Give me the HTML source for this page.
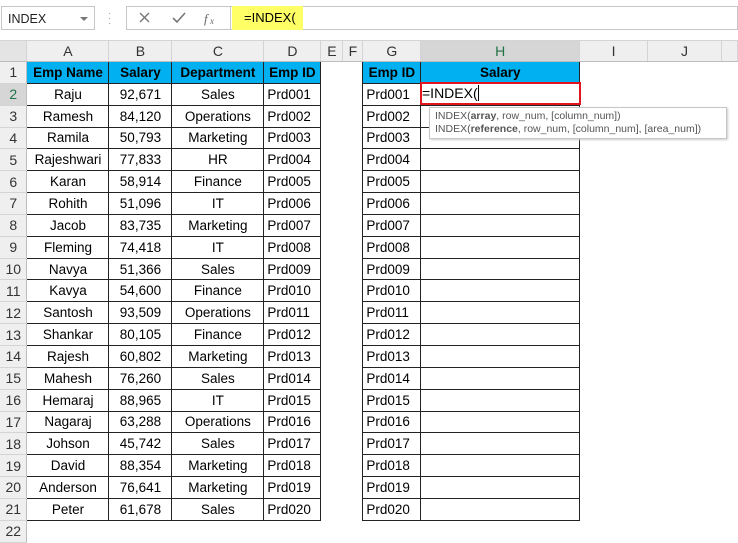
<!DOCTYPE html>
<html><head><meta charset="utf-8"><style>
body{margin:0;width:738px;height:533px;overflow:hidden;background:#fff;font-family:"Liberation Sans",Arial,sans-serif;position:relative}
.fb{position:absolute;left:0;top:0;width:738px;height:40px;background:#fff;border-bottom:1px solid #d4d4d4}
.nb{position:absolute;left:1px;top:6px;width:94px;height:24px;border:1px solid #c6c6c6;font-size:12.5px;line-height:24px;padding-left:6px;box-sizing:border-box;color:#222}
.nb:after{content:"";position:absolute;right:6px;top:10px;border:4px solid transparent;border-top:4px solid #777}
.dots{position:absolute;left:108px;top:11px;color:#999;font-size:10px;line-height:5px}
.ic{position:absolute;left:126px;top:6px;width:104px;height:24px;border:1px solid #c6c6c6;border-right:none;box-sizing:border-box;color:#777}
.fx{position:absolute;left:230px;top:6px;width:508px;height:24px;border:1px solid #c6c6c6;box-sizing:border-box}
.yel{position:absolute;left:232px;top:6px;width:71px;height:24px;background:#ffff66;font-size:13px;line-height:24px;padding-left:12px;box-sizing:border-box}
table{position:absolute;left:0;top:41px;border-collapse:collapse;table-layout:fixed;font-size:13.5px}
td{padding:0;height:20.85px;text-align:center;white-space:nowrap;overflow:hidden}
tr.ch td{height:20px;background:#efefef;color:#333;border-right:1px solid #d4d4d4;border-bottom:1px solid #bdbdbd;font-size:14px}
td.rh{background:#efefef;color:#333;border-right:1px solid #bdbdbd;border-bottom:1px solid #d4d4d4;text-align:center;font-size:14px}
td.b{border:1px solid #222}
td.h{background:#00b0f0;font-weight:bold;border:1px solid #222}
td.l{text-align:left;padding-left:3px}
.tip{position:absolute;left:429px;top:107px;width:298px;height:32px;border:1px solid #c6c6c6;background:#fff;font-size:10.5px;color:#555;line-height:13px;padding:2px 0 0 5px;box-sizing:border-box;box-shadow:1px 1px 2px #ccc}
.sel{position:absolute;left:420px;top:82px;width:161px;height:23px;border:2px solid #e2141e;box-sizing:border-box;font-size:14px;line-height:19px;padding-left:0}
</style></head><body>
<div class="fb">
<div class="nb">INDEX</div>
<div class="dots">·<br>·<br>·</div>
<div class="ic"><svg width="104" height="22"><path d="M13 6l9 9M22 6l-9 9" stroke="#777" stroke-width="1.4"/><path d="M46 11l4 4 8-9" stroke="#777" stroke-width="1.6" fill="none"/><text x="77" y="16" font-family="Liberation Serif" font-style="italic" font-size="13" fill="#666">f</text><text x="83" y="17" font-family="Liberation Serif" font-style="italic" font-size="9" fill="#666">x</text></svg></div>
<div class="fx"></div>
<div class="yel">=INDEX(</div>
</div>
<table>
<colgroup><col style="width:27px"><col style="width:82px"><col style="width:63px"><col style="width:92px"><col style="width:57px"><col style="width:22px"><col style="width:20px"><col style="width:58px"><col style="width:159px"><col style="width:68px"><col style="width:74px"><col style="width:16px"></colgroup>
<tr class="ch"><td style="background:#e4e4e4"></td><td>A</td><td>B</td><td>C</td><td>D</td><td>E</td><td>F</td><td>G</td><td style="background:#d6d6d6;color:#217346">H</td><td>I</td><td>J</td><td></td></tr>
<tr><td class="rh">1</td><td class="h">Emp Name</td><td class="h">Salary</td><td class="h">Department</td><td class="h">Emp ID</td><td></td><td></td><td class="h">Emp ID</td><td class="h">Salary</td><td></td><td></td><td></td></tr>
<tr><td class="rh" style="background:#d6d6d6;color:#217346">2</td><td class="b">Raju</td><td class="b">92,671</td><td class="b">Sales</td><td class="b l">Prd001</td><td></td><td></td><td class="b l">Prd001</td><td class="b"></td><td></td><td></td><td></td></tr>
<tr><td class="rh">3</td><td class="b">Ramesh</td><td class="b">84,120</td><td class="b">Operations</td><td class="b l">Prd002</td><td></td><td></td><td class="b l">Prd002</td><td class="b"></td><td></td><td></td><td></td></tr>
<tr><td class="rh">4</td><td class="b">Ramila</td><td class="b">50,793</td><td class="b">Marketing</td><td class="b l">Prd003</td><td></td><td></td><td class="b l">Prd003</td><td class="b"></td><td></td><td></td><td></td></tr>
<tr><td class="rh">5</td><td class="b">Rajeshwari</td><td class="b">77,833</td><td class="b">HR</td><td class="b l">Prd004</td><td></td><td></td><td class="b l">Prd004</td><td class="b"></td><td></td><td></td><td></td></tr>
<tr><td class="rh">6</td><td class="b">Karan</td><td class="b">58,914</td><td class="b">Finance</td><td class="b l">Prd005</td><td></td><td></td><td class="b l">Prd005</td><td class="b"></td><td></td><td></td><td></td></tr>
<tr><td class="rh">7</td><td class="b">Rohith</td><td class="b">51,096</td><td class="b">IT</td><td class="b l">Prd006</td><td></td><td></td><td class="b l">Prd006</td><td class="b"></td><td></td><td></td><td></td></tr>
<tr><td class="rh">8</td><td class="b">Jacob</td><td class="b">83,735</td><td class="b">Marketing</td><td class="b l">Prd007</td><td></td><td></td><td class="b l">Prd007</td><td class="b"></td><td></td><td></td><td></td></tr>
<tr><td class="rh">9</td><td class="b">Fleming</td><td class="b">74,418</td><td class="b">IT</td><td class="b l">Prd008</td><td></td><td></td><td class="b l">Prd008</td><td class="b"></td><td></td><td></td><td></td></tr>
<tr><td class="rh">10</td><td class="b">Navya</td><td class="b">51,366</td><td class="b">Sales</td><td class="b l">Prd009</td><td></td><td></td><td class="b l">Prd009</td><td class="b"></td><td></td><td></td><td></td></tr>
<tr><td class="rh">11</td><td class="b">Kavya</td><td class="b">54,600</td><td class="b">Finance</td><td class="b l">Prd010</td><td></td><td></td><td class="b l">Prd010</td><td class="b"></td><td></td><td></td><td></td></tr>
<tr><td class="rh">12</td><td class="b">Santosh</td><td class="b">93,509</td><td class="b">Operations</td><td class="b l">Prd011</td><td></td><td></td><td class="b l">Prd011</td><td class="b"></td><td></td><td></td><td></td></tr>
<tr><td class="rh">13</td><td class="b">Shankar</td><td class="b">80,105</td><td class="b">Finance</td><td class="b l">Prd012</td><td></td><td></td><td class="b l">Prd012</td><td class="b"></td><td></td><td></td><td></td></tr>
<tr><td class="rh">14</td><td class="b">Rajesh</td><td class="b">60,802</td><td class="b">Marketing</td><td class="b l">Prd013</td><td></td><td></td><td class="b l">Prd013</td><td class="b"></td><td></td><td></td><td></td></tr>
<tr><td class="rh">15</td><td class="b">Mahesh</td><td class="b">76,260</td><td class="b">Sales</td><td class="b l">Prd014</td><td></td><td></td><td class="b l">Prd014</td><td class="b"></td><td></td><td></td><td></td></tr>
<tr><td class="rh">16</td><td class="b">Hemaraj</td><td class="b">88,965</td><td class="b">IT</td><td class="b l">Prd015</td><td></td><td></td><td class="b l">Prd015</td><td class="b"></td><td></td><td></td><td></td></tr>
<tr><td class="rh">17</td><td class="b">Nagaraj</td><td class="b">63,288</td><td class="b">Operations</td><td class="b l">Prd016</td><td></td><td></td><td class="b l">Prd016</td><td class="b"></td><td></td><td></td><td></td></tr>
<tr><td class="rh">18</td><td class="b">Johson</td><td class="b">45,742</td><td class="b">Sales</td><td class="b l">Prd017</td><td></td><td></td><td class="b l">Prd017</td><td class="b"></td><td></td><td></td><td></td></tr>
<tr><td class="rh">19</td><td class="b">David</td><td class="b">88,354</td><td class="b">Marketing</td><td class="b l">Prd018</td><td></td><td></td><td class="b l">Prd018</td><td class="b"></td><td></td><td></td><td></td></tr>
<tr><td class="rh">20</td><td class="b">Anderson</td><td class="b">76,641</td><td class="b">Marketing</td><td class="b l">Prd019</td><td></td><td></td><td class="b l">Prd019</td><td class="b"></td><td></td><td></td><td></td></tr>
<tr><td class="rh">21</td><td class="b">Peter</td><td class="b">61,678</td><td class="b">Sales</td><td class="b l">Prd020</td><td></td><td></td><td class="b l">Prd020</td><td class="b"></td><td></td><td></td><td></td></tr>
<tr><td class="rh">22</td><td></td><td></td><td></td><td></td><td></td><td></td><td></td><td></td><td></td><td></td><td></td></tr>
</table>
<div class="sel">=INDEX(<span style="border-left:1px solid #000"></span></div>
<div class="tip">INDEX(<b>array</b>, row_num, [column_num])<br>INDEX(<b>reference</b>, row_num, [column_num], [area_num])</div>
</body></html>
